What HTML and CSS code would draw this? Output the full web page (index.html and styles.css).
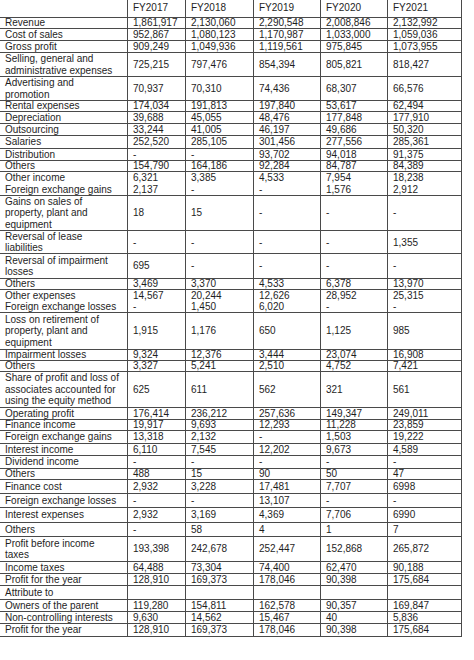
FILE: index.html
```html
<!DOCTYPE html>
<html>
<head>
<meta charset="utf-8">
<link rel="stylesheet" href="styles.css">
</head>
<body>
<table class="fin">
<colgroup>
<col class="c-label"><col class="c1"><col class="c2"><col class="c3"><col class="c4"><col class="c5">
</colgroup>
<tbody>
<tr class="head"><td></td><td>FY2017</td><td>FY2018</td><td>FY2019</td><td>FY2020</td><td>FY2021</td></tr>
<tr class="r11"><td>Revenue</td><td>1,861,917</td><td>2,130,060</td><td>2,290,548</td><td>2,008,846</td><td>2,132,992</td></tr>
<tr class="r12"><td>Cost of sales</td><td>952,867</td><td>1,080,123</td><td>1,170,987</td><td>1,033,000</td><td>1,059,036</td></tr>
<tr class="r12"><td>Gross profit</td><td>909,249</td><td>1,049,936</td><td>1,119,561</td><td>975,845</td><td>1,073,955</td></tr>
<tr class="r24"><td>Selling, general and<br>administrative expenses</td><td>725,215</td><td>797,476</td><td>854,394</td><td>805,821</td><td>818,427</td></tr>
<tr class="r24"><td>Advertising and<br>promotion</td><td>70,937</td><td>70,310</td><td>74,436</td><td>68,307</td><td>66,576</td></tr>
<tr class="r11"><td>Rental expenses</td><td>174,034</td><td>191,813</td><td>197,840</td><td>53,617</td><td>62,494</td></tr>
<tr class="r12"><td>Depreciation</td><td>39,688</td><td>45,055</td><td>48,476</td><td>177,848</td><td>177,910</td></tr>
<tr class="r12"><td>Outsourcing</td><td>33,244</td><td>41,005</td><td>46,197</td><td>49,686</td><td>50,320</td></tr>
<tr class="r13"><td>Salaries</td><td>252,520</td><td>285,105</td><td>301,456</td><td>277,556</td><td>285,361</td></tr>
<tr class="r12"><td>Distribution</td><td>-</td><td>-</td><td>93,702</td><td>94,018</td><td>91,375</td></tr>
<tr class="r11"><td>Others</td><td>154,790</td><td>164,186</td><td>92,284</td><td>84,787</td><td>84,389</td></tr>
<tr class="r12 nb"><td>Other income</td><td>6,321</td><td>3,385</td><td>4,533</td><td>7,954</td><td>18,238</td></tr>
<tr class="r12"><td>Foreign exchange gains</td><td>2,137</td><td>-</td><td>-</td><td>1,576</td><td>2,912</td></tr>
<tr class="r35"><td>Gains on sales of<br>property, plant and<br>equipment</td><td>18</td><td>15</td><td>-</td><td>-</td><td>-</td></tr>
<tr class="r23"><td>Reversal of lease<br>liabilities</td><td>-</td><td>-</td><td>-</td><td>-</td><td>1,355</td></tr>
<tr class="r25"><td>Reversal of impairment<br>losses</td><td>695</td><td>-</td><td>-</td><td>-</td><td>-</td></tr>
<tr class="r11"><td>Others</td><td>3,469</td><td>3,370</td><td>4,533</td><td>6,378</td><td>13,970</td></tr>
<tr class="r12 nb"><td>Other expenses</td><td>14,567</td><td>20,244</td><td>12,626</td><td>28,952</td><td>25,315</td></tr>
<tr class="r11"><td>Foreign exchange losses</td><td>-</td><td>1,450</td><td>6,020</td><td>-</td><td>-</td></tr>
<tr class="r37"><td>Loss on retirement of<br>property, plant and<br>equipment</td><td>1,915</td><td>1,176</td><td>650</td><td>1,125</td><td>985</td></tr>
<tr class="r11"><td>Impairment losses</td><td>9,324</td><td>12,376</td><td>3,444</td><td>23,074</td><td>16,908</td></tr>
<tr class="r11"><td>Others</td><td>3,327</td><td>5,241</td><td>2,510</td><td>4,752</td><td>7,421</td></tr>
<tr class="r36"><td>Share of profit and loss of<br>associates accounted for<br>using the equity method</td><td>625</td><td>611</td><td>562</td><td>321</td><td>561</td></tr>
<tr class="r12"><td>Operating profit</td><td>176,414</td><td>236,212</td><td>257,636</td><td>149,347</td><td>249,011</td></tr>
<tr class="r11"><td>Finance income</td><td>19,917</td><td>9,693</td><td>12,293</td><td>11,228</td><td>23,859</td></tr>
<tr class="r13"><td>Foreign exchange gains</td><td>13,318</td><td>2,132</td><td>-</td><td>1,503</td><td>19,222</td></tr>
<tr class="r12"><td>Interest income</td><td>6,110</td><td>7,545</td><td>12,202</td><td>9,673</td><td>4,589</td></tr>
<tr class="r13"><td>Dividend income</td><td>-</td><td>-</td><td>-</td><td>-</td><td>-</td></tr>
<tr class="r11"><td>Others</td><td>488</td><td>15</td><td>90</td><td>50</td><td>47</td></tr>
<tr class="r14"><td>Finance cost</td><td>2,932</td><td>3,228</td><td>17,481</td><td>7,707</td><td>6998</td></tr>
<tr class="r14"><td>Foreign exchange losses</td><td>-</td><td>-</td><td>13,107</td><td>-</td><td>-</td></tr>
<tr class="r15"><td>Interest expenses</td><td>2,932</td><td>3,169</td><td>4,369</td><td>7,706</td><td>6990</td></tr>
<tr class="r14"><td>Others</td><td>-</td><td>58</td><td>4</td><td>1</td><td>7</td></tr>
<tr class="r25"><td>Profit before income<br>taxes</td><td>193,398</td><td>242,678</td><td>252,447</td><td>152,868</td><td>265,872</td></tr>
<tr class="r12"><td>Income taxes</td><td>64,488</td><td>73,304</td><td>74,400</td><td>62,470</td><td>90,188</td></tr>
<tr class="r12"><td>Profit for the year</td><td>128,910</td><td>169,373</td><td>178,046</td><td>90,398</td><td>175,684</td></tr>
<tr class="r14"><td>Attribute to</td><td></td><td></td><td></td><td></td><td></td></tr>
<tr class="r12"><td>Owners of the parent</td><td>119,280</td><td>154,811</td><td>162,578</td><td>90,357</td><td>169,847</td></tr>
<tr class="r12"><td>Non-controlling interests</td><td>9,630</td><td>14,562</td><td>15,467</td><td>40</td><td>5,836</td></tr>
<tr class="r13"><td>Profit for the year</td><td>128,910</td><td>169,373</td><td>178,046</td><td>90,398</td><td>175,684</td></tr>
</tbody>
</table>
</body>
</html>
```
FILE: styles.css
```css
html, body {
  margin: 0;
  padding: 0;
  background: #ffffff;
}

body {
  font-family: "Liberation Sans", Arial, sans-serif;
  font-size: 10px;
  color: #1e1e1e;
}

.fin {
  border-collapse: separate;
  border-spacing: 0;
  table-layout: fixed;
  width: 462px;
}

.c-label { width: 128px; }
.c1 { width: 58px; }
.c2 { width: 68px; }
.c3 { width: 67px; }
.c4 { width: 67px; }
.c5 { width: 74px; }

.fin td {
  box-sizing: border-box;
  padding: 0 0 0 5px;
  border-right: 1px solid #4a4a4a;
  border-bottom: 1px solid #4a4a4a;
  line-height: 10px;
  vertical-align: middle;
  white-space: nowrap;
  overflow: hidden;
}

.fin tr.nb td {
  border-bottom: none;
}

.fin tr.head td {
  height: 18px;
  vertical-align: top;
  padding-top: 2px;
  line-height: 11px;
}

.r11 td { height: 11px; }
.r12 td { height: 12px; }
.r13 td { height: 13px; }
.r14 td { height: 14px; }
.r15 td { height: 15px; }
.r23 td { height: 23px; line-height: 11px; }
.r24 td { height: 24px; line-height: 11.5px; }
.r25 td { height: 25px; line-height: 11.5px; }
.r35 td { height: 35px; line-height: 11.3px; }
.r36 td { height: 36px; line-height: 11.5px; }
.r37 td { height: 37px; line-height: 11.5px; }
```
